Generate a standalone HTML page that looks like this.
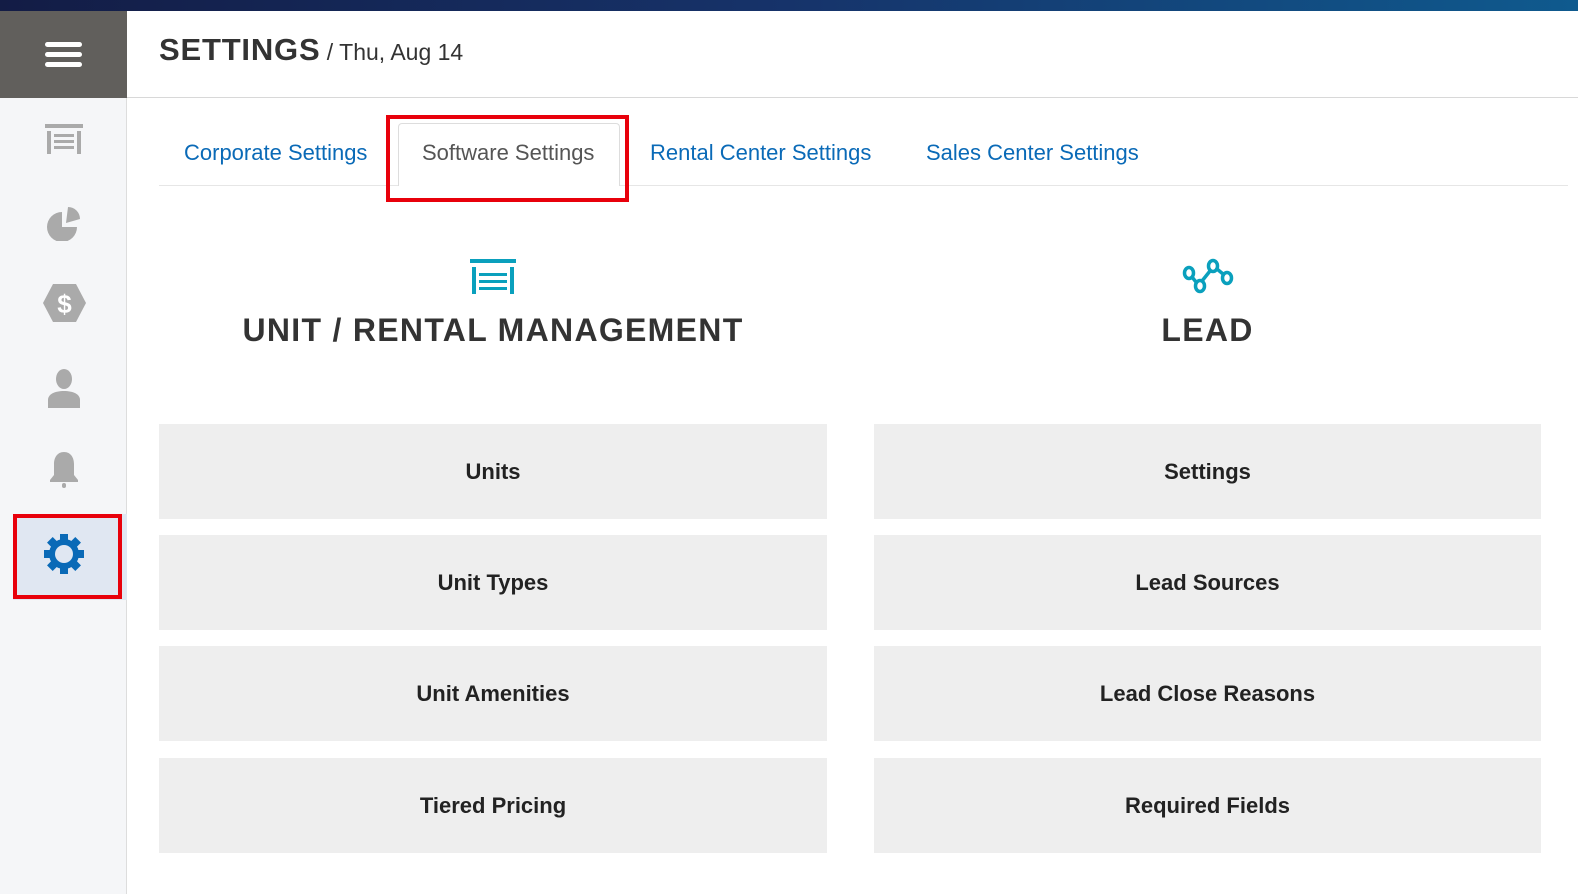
<!DOCTYPE html>
<html><head><style>
*{margin:0;padding:0;box-sizing:border-box}
body{width:1578px;height:894px;overflow:hidden;background:#fff;font-family:"Liberation Sans",sans-serif;position:relative}
.top{position:absolute;left:0;top:0;width:1578px;height:11px;background:linear-gradient(90deg,#131c45,#16336a 50%,#0f5a8e)}
.side{position:absolute;left:0;top:11px;width:127px;height:883px;background:#f5f6f8;border-right:1px solid #ddd}
.ham{position:absolute;left:0;top:11px;width:127px;height:87px;background:#615f5c}
.ham i{position:absolute;left:45px;width:37px;height:5px;border-radius:3px;background:#fff}
.hdr{position:absolute;left:127px;top:97px;width:1451px;height:1px;background:#d8d8d8}
.title{position:absolute;left:159px;top:32px;font-size:31px;font-weight:bold;color:#333;letter-spacing:0.8px}
.title span{font-size:23px;font-weight:normal;letter-spacing:0}
.tab{position:absolute;top:140px;font-size:22px;color:#0a6ab7}
.tabline{position:absolute;left:159px;top:185px;width:1409px;height:1px;background:#e6e6e6}
.act{position:absolute;left:398px;top:123px;width:222px;height:63px;border:1px solid #ddd;border-bottom:none;background:#fff;border-radius:4px 4px 0 0}
.red{position:absolute;border:4px solid #e8000b}
.h{position:absolute;font-size:32px;font-weight:bold;color:#333;text-align:center;letter-spacing:1.3px}
.b{position:absolute;height:95px;background:#eeeeee;font-size:22px;font-weight:bold;color:#222;display:flex;align-items:center;justify-content:center}
.l{left:159px;width:668px}.r{left:874px;width:667px}
.gear{position:absolute;left:13px;top:514px;width:114px;height:86px;background:#e0e7f2}
</style></head><body>
<div class="top"></div>
<div class="side"></div>
<div class="ham"><i style="top:31px"></i><i style="top:41px"></i><i style="top:51px"></i></div>
<div class="hdr"></div>
<div class="title">SETTINGS<span> / Thu, Aug 14</span></div>
<div class="tabline"></div>
<div class="act"></div>
<div class="tab" style="left:184px">Corporate Settings</div>
<div class="tab" style="left:422px;color:#555">Software Settings</div>
<div class="tab" style="left:650px">Rental Center Settings</div>
<div class="tab" style="left:926px">Sales Center Settings</div>
<div class="red" style="left:386px;top:115px;width:243px;height:87px"></div>

<svg style="position:absolute;left:45px;top:124px" width="38" height="30" viewBox="0 0 38 30"><rect x="0" y="0" width="38" height="4" fill="#aaa"/><rect x="2" y="7" width="4" height="23" fill="#aaa"/><rect x="32" y="7" width="4" height="23" fill="#aaa"/><rect x="9" y="10" width="20" height="3" fill="#aaa"/><rect x="9" y="16" width="20" height="3" fill="#aaa"/><rect x="9" y="22" width="20" height="3" fill="#aaa"/></svg>
<svg style="position:absolute;left:46px;top:205px" width="36" height="36" viewBox="0 0 36 36"><path d="M16 7A15 15 0 1 0 31 22L16 22Z" fill="#aaa"/><path d="M22 2A12 12 0 0 1 34 14L20 18Z" fill="#aaa"/></svg>
<svg style="position:absolute;left:42px;top:283px" width="45" height="40" viewBox="0 0 45 40"><path d="M11 1H34L44 20L34 39H11L1 20Z" fill="#aaa"/><text x="22.5" y="30" text-anchor="middle" font-family="Liberation Sans" font-weight="bold" font-size="26" fill="#fff">$</text></svg>
<svg style="position:absolute;left:47px;top:368px" width="34" height="40" viewBox="0 0 34 40"><ellipse cx="17" cy="11" rx="8" ry="10" fill="#aaa"/><path d="M1 40V32C1 26 8 23 17 23C26 23 33 26 33 32V40Z" fill="#aaa"/></svg>
<svg style="position:absolute;left:48px;top:451px" width="32" height="38" viewBox="0 0 32 38"><path d="M16 1C9 1 6 7 6 13V24L2 29V31H30V29L26 24V13C26 7 23 1 16 1Z" fill="#aaa"/><rect x="14" y="32" width="4" height="5" rx="2" fill="#aaa"/></svg>
<div class="gear"></div>
<svg style="position:absolute;left:44px;top:534px" width="40" height="40" viewBox="0 0 40 40"><g fill="#0a6ab7" transform="translate(20 20)"><circle r="15"/><g id="t"><rect x="-4" y="-20" width="8" height="8"/></g><use href="#t" transform="rotate(45)"/><use href="#t" transform="rotate(90)"/><use href="#t" transform="rotate(135)"/><use href="#t" transform="rotate(180)"/><use href="#t" transform="rotate(225)"/><use href="#t" transform="rotate(270)"/><use href="#t" transform="rotate(315)"/></g><circle cx="20" cy="20" r="9" fill="#e0e7f2"/></svg>
<div class="red" style="left:13px;top:514px;width:109px;height:85px"></div>

<svg style="position:absolute;left:470px;top:259px" width="46" height="35" viewBox="0 0 46 35"><rect x="0" y="0" width="46" height="4" fill="#0aa0bd"/><rect x="2" y="8" width="4" height="27" fill="#0aa0bd"/><rect x="40" y="8" width="4" height="27" fill="#0aa0bd"/><rect x="9" y="14" width="28" height="3" fill="#0aa0bd"/><rect x="9" y="21" width="28" height="3" fill="#0aa0bd"/><rect x="9" y="28" width="28" height="3" fill="#0aa0bd"/></svg>
<svg style="position:absolute;left:1181px;top:257px" width="54" height="38" viewBox="0 0 54 38"><g fill="none" stroke="#0aa0bd" stroke-width="3.5"><ellipse cx="8" cy="16" rx="4.5" ry="5.5"/><ellipse cx="32" cy="9" rx="4.5" ry="5.5"/><ellipse cx="46" cy="21" rx="4.5" ry="5.5"/><ellipse cx="19" cy="29" rx="4.5" ry="5.5"/><path d="M11 20L15 25M21 24L29 14M36 12L42 17"/></g></svg>
<div class="h" style="left:159px;width:668px;top:312px">UNIT / RENTAL MANAGEMENT</div>
<div class="h" style="left:874px;width:667px;top:312px">LEAD</div>

<div class="b l" style="top:424px">Units</div>
<div class="b l" style="top:535px">Unit Types</div>
<div class="b l" style="top:646px">Unit Amenities</div>
<div class="b l" style="top:758px">Tiered Pricing</div>
<div class="b r" style="top:424px">Settings</div>
<div class="b r" style="top:535px">Lead Sources</div>
<div class="b r" style="top:646px">Lead Close Reasons</div>
<div class="b r" style="top:758px">Required Fields</div>
</body></html>
